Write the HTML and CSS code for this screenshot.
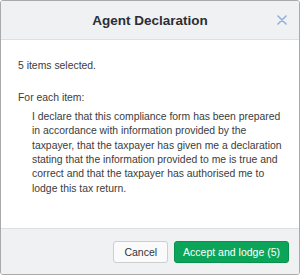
FILE: index.html
```html
<!DOCTYPE html>
<html lang="en">
<head>
    <meta charset="UTF-8">
    <meta name="viewport" content="width=device-width, initial-scale=1.0">
    <title>Agent Declaration</title>
    <link rel="stylesheet" href="styles.css">
</head>
<body>
    <div class="dialog">
        <div class="dialog-header">
            <h1>Agent Declaration</h1>
            <span class="close">
                <svg width="10" height="10" viewBox="0 0 10 10">
                    <path d="M1 1 L9 9 M9 1 L1 9" stroke="#8fb0e0" stroke-width="1.6" stroke-linecap="round"/>
                </svg>
            </span>
        </div>

        <div class="dialog-body">
            <p>5 items selected.</p>
            <p class="for-each">For each item:</p>
            <p class="declaration">I declare that this compliance form has been prepared in accordance with information provided by the taxpayer, that the taxpayer has given me a declaration stating that the information provided to me is true and correct and that the taxpayer has authorised me to lodge this tax return.</p>
        </div>

        <div class="dialog-footer">
            <button class="btn">Cancel</button>
            <button class="btn btn-primary">Accept and lodge (5)</button>
        </div>
    </div>
</body>
</html>
```

FILE: styles.css
```css
body {
    margin: 0;
    font-family: "Liberation Sans", Arial, sans-serif;
    background-color: white;
}

.dialog {
    width: 300px;
    height: 275px;
    box-sizing: border-box;
    border: 1px solid #a9a9a9;
    border-radius: 3px;
    display: flex;
    flex-direction: column;
    overflow: hidden;
}

.dialog-header {
    height: 38px;
    background-color: #f0f1f3;
    border-bottom: 1px solid #dcdfe3;
    display: flex;
    align-items: center;
    justify-content: center;
    position: relative;
}

.dialog-header h1 {
    margin: 0;
    font-size: 13.5px;
    font-weight: bold;
    color: #2b2e33;
}

.close {
    position: absolute;
    right: 12px;
    top: 14px;
    line-height: 0;
}

.dialog-body {
    flex: 1;
    padding: 19px 17px 0 17px;
    font-size: 10.4px;
    color: #3a3c40;
    line-height: 14.4px;
}

.dialog-body p {
    margin: 0;
}

.for-each {
    margin-top: 18px !important;
}

.declaration {
    padding-left: 14px;
    margin-top: 4px !important;
}

.dialog-footer {
    height: 45px;
    background-color: #f0f1f3;
    border-top: 1px solid #dcdfe3;
    display: flex;
    align-items: center;
    justify-content: flex-end;
    gap: 6px;
    padding-right: 10px;
}

.btn {
    font-family: "Liberation Sans", Arial, sans-serif;
    font-size: 10.5px;
    height: 22px;
    padding: 0 10px;
    border: 1px solid #ccced2;
    border-radius: 3px;
    background-color: #fafafa;
    color: #333;
}

.btn-primary {
    background-color: #0ba55a;
    border-color: #09914f;
    color: white;
    padding: 0 8px;
}
```
